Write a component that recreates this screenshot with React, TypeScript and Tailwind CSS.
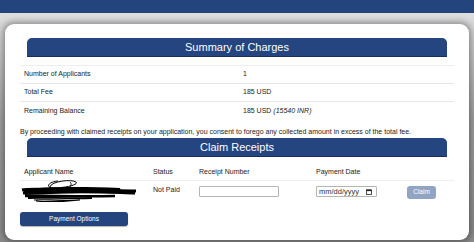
import React from 'react';

const summaryRows: { label: string; value: React.ReactNode }[] = [
  { label: 'Number of Applicants', value: '1' },
  { label: 'Total Fee', value: '185 USD' },
  {
    label: 'Remaining Balance',
    value: (
      <>
        185 USD <i>(15540 INR)</i>
      </>
    ),
  },
];

function SectionHeader({ title }: { title: string }) {
  return (
    <div className="mx-[7px] h-[18px] bg-[#24457f] rounded-t-[5px] flex items-center justify-center text-white text-[11px] leading-none shadow-[0_1px_0_#1a2f57]">
      {title}
    </div>
  );
}

// redacted applicant name
function Scribble() {
  return (
    <svg width="118" height="22" viewBox="0 0 118 22" className="block">
      <path d="M30 7 C31 1, 52 -1, 56 2 C59 5, 44 8, 33 8 C26 8, 27 2, 38 1" fill="none" stroke="#000" strokeWidth="1" />
      <path d="M50 2 C52 4, 51 6, 49 8" fill="none" stroke="#000" strokeWidth="0.9" />
      <path d="M3 9 C20 7, 60 6, 100 8 L101 12 C70 12, 40 14, 5 15 Z" fill="#000" />
      <path d="M2 10 C10 8, 30 10, 60 10 C80 10, 100 11, 116 11" fill="none" stroke="#000" strokeWidth="3" />
      <path d="M3 13 C20 11, 50 12, 80 12 C95 12, 105 13, 115 13" fill="none" stroke="#000" strokeWidth="2.8" />
      <path d="M5 16 C25 15, 50 17, 95 16" fill="none" stroke="#000" strokeWidth="2.4" />
      <path d="M8 18 C25 17, 45 19, 72 18" fill="none" stroke="#000" strokeWidth="1.8" />
      <path d="M14 20 C22 19, 38 21, 60 20 C42 22, 26 22, 16 21" fill="none" stroke="#000" strokeWidth="1.2" />
    </svg>
  );
}

export default function App() {
  return (
    <div
      className="w-[474px] h-[242px] overflow-hidden bg-gradient-to-b from-[#e6e6e8] via-[#a0a0a0] to-[#8a8a8a] text-[#222]"
      style={{ fontFamily: '"Liberation Sans", Arial, sans-serif' }}
    >
      <div className="h-[13px] bg-[#23447d]" />
      <div className="px-[5px] pt-[11px]">
        <div className="bg-white rounded-[9px] h-[216px] pt-[14px] px-[15px] shadow-[0_0_6px_2px_rgba(0,0,0,0.35)]">
          <SectionHeader title="Summary of Charges" />
          <div className="mt-[9px] border-t border-[#eeeeee] text-[7px]">
            {summaryRows.map((r, i) => (
              <div
                key={r.label}
                className={`grid grid-cols-[219px_1fr] h-[18px] items-center ${i < summaryRows.length - 1 ? 'border-b border-[#e6e6e6]' : ''}`}
              >
                <div className="px-1">{r.label}</div>
                <div className="px-1">{r.value}</div>
              </div>
            ))}
          </div>
          <p className="mt-[8px] text-[7px] leading-none text-[#222]">
            By proceeding with claimed receipts on your application, you consent to forego any collected amount in excess of the total fee.
          </p>
          <div className="mt-[3px]">
            <SectionHeader title="Claim Receipts" />
          </div>
          <div className="mt-[11px] text-[7px]">
            <div className="grid grid-cols-[129px_46px_117px_91px_1fr] h-[14px] items-center border-b border-[#eeeeee] pb-[2px]">
              <div className="px-1">Applicant Name</div>
              <div className="px-1">Status</div>
              <div className="px-1">Receipt Number</div>
              <div className="px-1">Payment Date</div>
              <div />
            </div>
            <div className="grid grid-cols-[129px_46px_117px_91px_1fr] h-[20px] items-center">
              <div className="self-start -mt-[1px]">
                <Scribble />
              </div>
              <div className="px-1 -mt-[2px]">Not Paid</div>
              <div className="px-1">
                <div className="w-[80px] h-[11px] border border-[#b5b5b5] rounded-[1px] bg-white" />
              </div>
              <div className="px-1">
                <div className="w-[61px] h-[11px] border border-[#b5b5b5] rounded-[1px] bg-white flex items-center justify-between pl-[2px] pr-[4px] text-[7.5px] text-[#333]">
                  <span>mm/dd/yyyy</span>
                  <svg width="6" height="6" viewBox="0 0 6 6">
                    <rect x="0.5" y="0.8" width="5" height="4.7" fill="none" stroke="#222" strokeWidth="0.8" />
                    <rect x="0.5" y="0.8" width="5" height="1.3" fill="#222" />
                  </svg>
                </div>
              </div>
              <div className="px-1 pt-[2px]">
                <button className="w-[29px] h-[13px] rounded-[3px] bg-[#91a4c2] text-white text-[6.5px] leading-none">
                  Claim
                </button>
              </div>
            </div>
          </div>
          <button className="mt-[11px] w-[108px] h-[14px] rounded-[3px] bg-[#23447d] text-white text-[6.5px] leading-none shadow-[0_1px_1px_rgba(0,0,0,0.3)]">
            Payment Options
          </button>
        </div>
      </div>
    </div>
  );
}
